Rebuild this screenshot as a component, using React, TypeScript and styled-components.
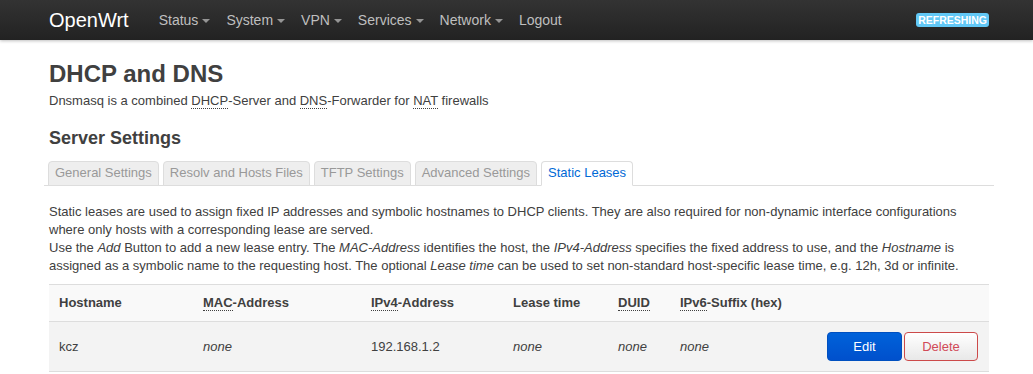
import React from 'react';
import styled, { createGlobalStyle } from 'styled-components';

const GlobalStyle = createGlobalStyle`
  body {
    margin: 0;
    background: #fff;
    font-family: "Liberation Sans", Arial, sans-serif;
    font-size: 13px;
    line-height: 18px;
    color: #404040;
  }
`;

const menus = ['Status', 'System', 'VPN', 'Services', 'Network'];

const tabs = [
  'General Settings',
  'Resolv and Hosts Files',
  'TFTP Settings',
  'Advanced Settings',
  'Static Leases',
];

interface Lease {
  hostname: string;
  mac: string;
  ipv4: string;
  leasetime: string;
  duid: string;
  ipv6: string;
}

const leases: Lease[] = [
  { hostname: 'kcz', mac: 'none', ipv4: '192.168.1.2', leasetime: 'none', duid: 'none', ipv6: 'none' },
];

const App = (): JSX.Element => {
  return (
    <>
      <GlobalStyle />
      <TopBar>
        <TopInner>
          <Brand>OpenWrt</Brand>
          <NavList>
            {menus.map((m) => (
              <NavItem key={m}>
                {m}
                <Caret />
              </NavItem>
            ))}
            <NavItem>Logout</NavItem>
          </NavList>
          <Badge>Refreshing</Badge>
        </TopInner>
      </TopBar>

      <Container>
        <Title>DHCP and DNS</Title>
        <Intro>
          Dnsmasq is a combined <Abbr>DHCP</Abbr>-Server and <Abbr>DNS</Abbr>-Forwarder for{' '}
          <Abbr>NAT</Abbr> firewalls
        </Intro>

        <SectionTitle>Server Settings</SectionTitle>
        <TabBar>
          {tabs.map((t) => (
            <Tab key={t} active={t === 'Static Leases'}>
              {t}
            </Tab>
          ))}
        </TabBar>

        <Description>
          Static leases are used to assign fixed IP addresses and symbolic hostnames to DHCP clients. They
          are also required for non-dynamic interface configurations where only hosts with a corresponding
          lease are served.
          <br />
          Use the <em>Add</em> Button to add a new lease entry. The <em>MAC-Address</em> identifies the host,
          the <em>IPv4-Address</em> specifies the fixed address to use, and the <em>Hostname</em> is assigned
          as a symbolic name to the requesting host. The optional <em>Lease time</em> can be used to set
          non-standard host-specific lease time, e.g. 12h, 3d or infinite.
        </Description>

        <Table>
          <thead>
            <tr>
              <HeadCell width={144}>Hostname</HeadCell>
              <HeadCell width={168}>
                <Abbr>MAC</Abbr>-Address
              </HeadCell>
              <HeadCell width={142}>
                <Abbr>IPv4</Abbr>-Address
              </HeadCell>
              <HeadCell width={105}>Lease time</HeadCell>
              <HeadCell width={62}>
                <Abbr>DUID</Abbr>
              </HeadCell>
              <HeadCell>
                <Abbr>IPv6</Abbr>-Suffix (hex)
              </HeadCell>
              <HeadCell />
            </tr>
          </thead>
          <tbody>
            {leases.map((l, i) => (
              <tr key={i}>
                <Cell>{l.hostname}</Cell>
                <Cell italic>{l.mac}</Cell>
                <Cell>{l.ipv4}</Cell>
                <Cell italic>{l.leasetime}</Cell>
                <Cell italic>{l.duid}</Cell>
                <Cell italic>{l.ipv6}</Cell>
                <ActionCell>
                  <EditButton>Edit</EditButton>
                  <DeleteButton>Delete</DeleteButton>
                </ActionCell>
              </tr>
            ))}
          </tbody>
        </Table>
      </Container>
    </>
  );
};

export default App;

const TopBar = styled.div`
  height: 40px;
  background: linear-gradient(#333333, #222222);
  box-shadow: 0 1px 3px rgba(0, 0, 0, 0.25);
`;

const TopInner = styled.div`
  display: flex;
  align-items: center;
  height: 40px;
  width: 940px;
  margin-left: 49px;
`;

const Brand = styled.div`
  font-size: 20px;
  color: #ffffff;
  margin-right: 22px;
`;

const NavList = styled.div`
  display: flex;
  flex: 1;
`;

const NavItem = styled.div`
  display: flex;
  align-items: center;
  padding: 0 8px;
  font-size: 14px;
  color: #bfbfbf;
`;

const Caret = styled.span`
  display: inline-block;
  margin-left: 4px;
  margin-top: 2px;
  width: 0;
  height: 0;
  border-left: 4px solid transparent;
  border-right: 4px solid transparent;
  border-top: 4px solid #ffffff;
  opacity: 0.5;
`;

const Badge = styled.span`
  background: #62c8f6;
  color: #ffffff;
  font-size: 10.5px;
  font-weight: bold;
  line-height: 14px;
  padding: 0 2px;
  border-radius: 3px;
  text-transform: uppercase;
`;

const Container = styled.div`
  width: 940px;
  margin-left: 49px;
`;

const Title = styled.h2`
  margin: 16px 0 0;
  font-size: 24px;
  line-height: 36px;
  font-weight: bold;
  color: #404040;
`;

const Intro = styled.div`
  margin: 0;
`;

const Abbr = styled.abbr`
  text-decoration: none;
  border-bottom: 1px dotted #404040;
`;

const SectionTitle = styled.h3`
  margin: 15px 0 0;
  font-size: 18px;
  line-height: 27px;
  font-weight: bold;
  color: #404040;
`;

const TabBar = styled.div`
  display: flex;
  gap: 4px;
  margin: 9px -5px 0;
  padding-left: 4px;
  border-bottom: 1px solid #dddddd;
`;

const Tab = styled.div<{ active?: boolean }>`
  padding: 2px 6px 3px;
  margin-bottom: -1px;
  border: 1px solid #dddddd;
  border-bottom: 1px solid ${(p) => (p.active ? '#ffffff' : '#dddddd')};
  border-radius: 4px 4px 0 0;
  background: ${(p) => (p.active ? '#ffffff' : '#eeeeee')};
  color: ${(p) => (p.active ? '#0069d6' : '#999999')};
`;

const Description = styled.div`
  margin-top: 17px;
`;

const Table = styled.table`
  width: 940px;
  margin-top: 9px;
  border-collapse: collapse;
`;

const HeadCell = styled.th<{ width?: number }>`
  width: ${(p) => (p.width ? `${p.width - 20}px` : 'auto')};
  padding: 9px 10px;
  text-align: left;
  font-weight: bold;
  background: #f9f9f9;
  border-top: 1px solid #dddddd;
  white-space: nowrap;
`;

const Cell = styled.td<{ italic?: boolean }>`
  padding: 10px;
  background: #f3f3f3;
  border-top: 1px solid #dddddd;
  border-bottom: 1px solid #dddddd;
  font-style: ${(p) => (p.italic ? 'italic' : 'normal')};
  white-space: nowrap;
`;

const ActionCell = styled(Cell)`
  text-align: right;
  padding-right: 11px;
`;

const Button = styled.button`
  height: 29px;
  width: 75px;
  font-family: "Liberation Sans", Arial, sans-serif;
  font-size: 13px;
  border-radius: 4px;
  cursor: pointer;
  vertical-align: middle;
`;

const EditButton = styled(Button)`
  color: #ffffff;
  background: linear-gradient(#0062da, #0050cc);
  border: 1px solid #0050c0;
  margin-right: 2px;
`;

const DeleteButton = styled(Button)`
  width: 74px;
  color: #d14a58;
  background: linear-gradient(#ffffff, #e8e8e8);
  border: 1px solid #cc4a4a;
`;
